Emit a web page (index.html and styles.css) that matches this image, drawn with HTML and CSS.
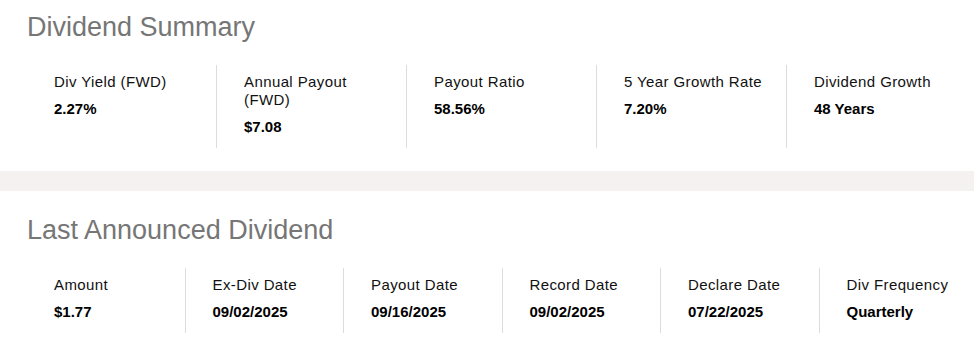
FILE: index.html
```html
<!DOCTYPE html>
<html lang="en">
<head>
<meta charset="utf-8">
<title>Dividends</title>
<link rel="stylesheet" href="styles.css">
</head>
<body>
<section class="section section-first">
  <h2 class="title">Dividend Summary</h2>
  <div class="stats stats-5">
    <div class="stat"><div class="label">Div Yield (FWD)</div><div class="value">2.27%</div></div>
    <div class="stat"><div class="label">Annual Payout<br>(FWD)</div><div class="value">$7.08</div></div>
    <div class="stat"><div class="label">Payout Ratio</div><div class="value">58.56%</div></div>
    <div class="stat"><div class="label">5 Year Growth Rate</div><div class="value">7.20%</div></div>
    <div class="stat"><div class="label">Dividend Growth</div><div class="value">48 Years</div></div>
  </div>
</section>
<div class="band"></div>
<section class="section section-second">
  <h2 class="title">Last Announced Dividend</h2>
  <div class="stats stats-6">
    <div class="stat"><div class="label">Amount</div><div class="value">$1.77</div></div>
    <div class="stat"><div class="label">Ex-Div Date</div><div class="value">09/02/2025</div></div>
    <div class="stat"><div class="label">Payout Date</div><div class="value">09/16/2025</div></div>
    <div class="stat"><div class="label">Record Date</div><div class="value">09/02/2025</div></div>
    <div class="stat"><div class="label">Declare Date</div><div class="value">07/22/2025</div></div>
    <div class="stat"><div class="label">Div Frequency</div><div class="value">Quarterly</div></div>
  </div>
</section>
</body>
</html>
```
FILE: styles.css
```css
html, body {
  margin: 0;
  padding: 0;
  background: #ffffff;
  overflow: hidden;
}
body {
  font-family: "Liberation Sans", Arial, sans-serif;
  color: #111111;
  width: 974px;
}
.section {
  padding-left: 26px;
}
.section-first {
  padding-top: 11px;
  padding-bottom: 23px;
}
.section-second {
  padding-top: 23px;
}
.title {
  margin: 0 0 22px 1px;
  font-size: 27px;
  line-height: 32px;
  font-weight: normal;
  color: #767676;
}
.stats {
  display: grid;
}
.stats-5 {
  grid-template-columns: repeat(5, 190px);
}
.stats-6 {
  grid-template-columns: repeat(6, 158.5px);
}
.stat {
  border-left: 1px solid #dcdcdc;
  padding: 8px 0 12px 27px;
}
.stat:first-child {
  border-left-color: transparent;
}
.label {
  font-size: 15px;
  line-height: 18px;
  letter-spacing: 0.4px;
  color: #111111;
}
.value {
  margin-top: 9px;
  font-size: 15px;
  line-height: 18px;
  font-weight: bold;
  color: #000000;
}
.band {
  height: 20px;
  background: #f4f1f0;
}
```
